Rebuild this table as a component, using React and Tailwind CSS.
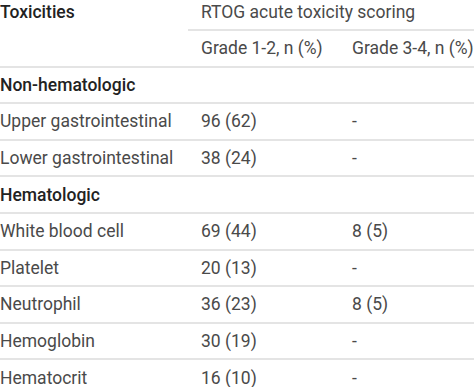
const rows = [
  { type: 'group', label: 'Non-hematologic' },
  { label: 'Upper gastrointestinal', g12: '96 (62)', g34: '-' },
  { label: 'Lower gastrointestinal', g12: '38 (24)', g34: '-' },
  { type: 'group', label: 'Hematologic' },
  { label: 'White blood cell', g12: '69 (44)', g34: '8 (5)' },
  { label: 'Platelet', g12: '20 (13)', g34: '-' },
  { label: 'Neutrophil', g12: '36 (23)', g34: '8 (5)' },
  { label: 'Hemoglobin', g12: '30 (19)', g34: '-' },
  { label: 'Hematocrit', g12: '16 (10)', g34: '-' },
];

const cell = 'py-[7.3px] leading-[20px] align-middle whitespace-nowrap';

export default function App() {
  return (
    <div className="w-[474px] h-[387px] overflow-hidden bg-white font-['Roboto',sans-serif] text-[17.5px] text-[#4a4a4a]">
      <table className="w-[540px] border-collapse table-fixed text-left">
        <colgroup>
          <col className="w-[188px]" />
          <col className="w-[151px]" />
          <col className="w-[201px]" />
        </colgroup>
        <thead>
          <tr>
            <th
              rowSpan={2}
              className="pt-[2px] leading-[20px] align-top font-medium text-[#222] border-b-2 border-[#e4e4e4]"
            >
              Toxicities
            </th>
            <th
              colSpan={2}
              className="pl-[13px] pt-[2px] pb-[7px] leading-[20px] font-normal border-b-2 border-[#e4e4e4]"
            >
              RTOG acute toxicity scoring
            </th>
          </tr>
          <tr>
            <th className={`${cell} pl-[13px] font-normal border-b-2 border-[#e4e4e4]`}>Grade 1-2, n (%)</th>
            <th className={`${cell} pl-[13px] font-normal border-b-2 border-[#e4e4e4]`}>Grade 3-4, n (%)</th>
          </tr>
        </thead>
        <tbody>
          {rows.map((r) =>
            r.type === 'group' ? (
              <tr key={r.label} className="border-b-2 border-[#e4e4e4]">
                <td colSpan={3} className={`${cell} font-medium text-[#222]`}>
                  {r.label}
                </td>
              </tr>
            ) : (
              <tr key={r.label} className="border-b-2 border-[#e4e4e4]">
                <td className={cell}>{r.label}</td>
                <td className={`${cell} pl-[13px]`}>{r.g12}</td>
                <td className={`${cell} pl-[13px]`}>{r.g34}</td>
              </tr>
            )
          )}
        </tbody>
      </table>
    </div>
  );
}
